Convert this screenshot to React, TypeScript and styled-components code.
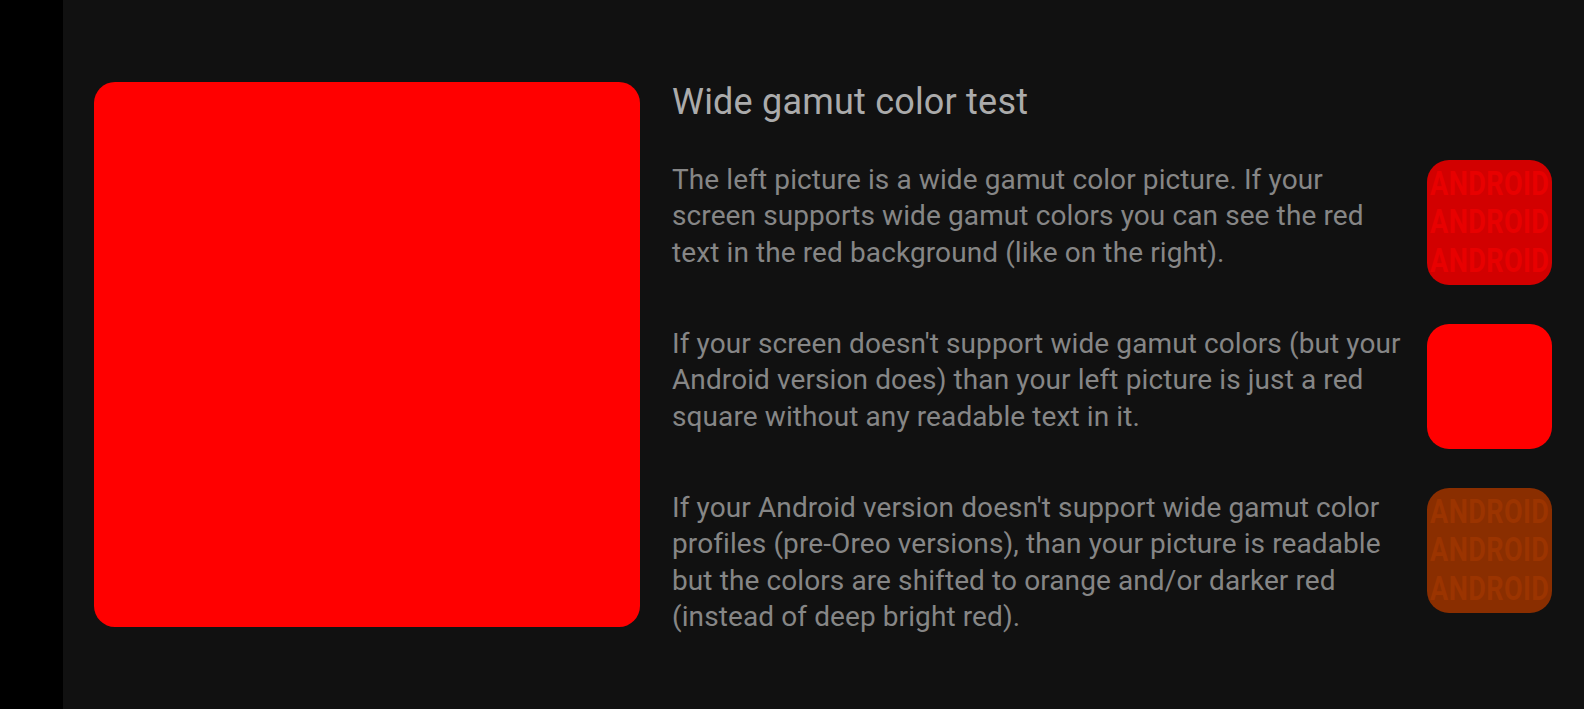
import React from "react";
import styled, { createGlobalStyle } from "styled-components";

const GlobalStyle = createGlobalStyle`
  html, body {
    margin: 0;
    padding: 0;
    background: #000000;
  }
  * { box-sizing: border-box; }
`;

const Page = styled.div`
  display: flex;
  width: 1584px;
  height: 709px;
  background: #000000;
  font-family: Roboto, "Noto Sans", "Liberation Sans", sans-serif;
`;

const Gutter = styled.div`
  width: 63px;
  flex: none;
  background: #000000;
`;

const Main = styled.main`
  flex: 1;
  display: flex;
  align-items: center;
  gap: 32px;
  padding: 0 32px 0 31px;
  background: #111111;
`;

const BigSquare = styled.div`
  flex: none;
  width: 546px;
  height: 545px;
  border-radius: 21px;
  background: #ff0000;
`;

const Info = styled.section`
  flex: 1;
  height: 545px;
  display: flex;
  flex-direction: column;
`;

const Title = styled.h1`
  margin: 0 0 38px 0;
  font-size: 36px;
  line-height: 40px;
  letter-spacing: 0.2px;
  font-weight: 400;
  color: #ababab;
`;

const Rows = styled.div`
  display: flex;
  flex-direction: column;
  gap: 39px;
`;

const Row = styled.div`
  display: flex;
  align-items: flex-start;
  justify-content: space-between;
  gap: 16px;
`;

const Para = styled.p`
  margin: 0;
  padding-top: 2px;
  font-size: 28px;
  line-height: 36.4px;
  letter-spacing: 0.1px;
  color: #868686;
  white-space: nowrap;
`;

const Line = styled.span`
  display: block;
`;

const Tile = styled.div<{ $bg: string; $fg: string }>`
  flex: none;
  width: 125px;
  height: 125px;
  border-radius: 22px;
  background: ${(p) => p.$bg};
  color: ${(p) => p.$fg};
  overflow: hidden;
  display: flex;
  flex-direction: column;
  justify-content: center;
  align-items: center;
`;

const TileWord = styled.span`
  display: block;
  font-family: Roboto, "Liberation Sans", sans-serif;
  font-weight: 700;
  font-size: 33px;
  line-height: 38.5px;
  letter-spacing: 0.5px;
  transform: scaleX(0.82);
  white-space: nowrap;
`;

const rows = [
  {
    lines: [
      "The left picture is a wide gamut color picture. If your",
      "screen supports wide gamut colors you can see the red",
      "text in the red background (like on the right).",
    ],
    tile: { bg: "#d20000", fg: "#e80000", words: true },
  },
  {
    lines: [
      "If your screen doesn't support wide gamut colors (but your",
      "Android version does) than your left picture is just a red",
      "square without any readable text in it.",
    ],
    tile: { bg: "#ff0000", fg: "#ff0000", words: false },
  },
  {
    lines: [
      "If your Android version doesn't support wide gamut color",
      "profiles (pre-Oreo versions), than your picture is readable",
      "but the colors are shifted to orange and/or darker red",
      "(instead of deep bright red).",
    ],
    tile: { bg: "#8a2e00", fg: "#9b3400", words: true },
  },
];

export default function App() {
  return (
    <>
      <GlobalStyle />
      <Page>
        <Gutter />
        <Main>
          <BigSquare />
          <Info>
            <Title>Wide gamut color test</Title>
            <Rows>
              {rows.map((r, i) => (
                <Row key={i}>
                  <Para>
                    {r.lines.map((l, j) => (
                      <Line key={j}>{l}</Line>
                    ))}
                  </Para>
                  <Tile $bg={r.tile.bg} $fg={r.tile.fg}>
                    {r.tile.words && (
                      <>
                        <TileWord>ANDROID</TileWord>
                        <TileWord>ANDROID</TileWord>
                        <TileWord>ANDROID</TileWord>
                      </>
                    )}
                  </Tile>
                </Row>
              ))}
            </Rows>
          </Info>
        </Main>
      </Page>
    </>
  );
}
